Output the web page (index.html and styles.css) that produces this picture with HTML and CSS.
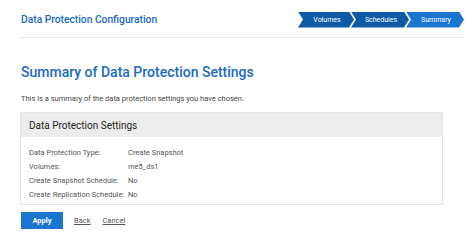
FILE: index.html
```html
<!DOCTYPE html>
<html>
<head>
<meta charset="utf-8">
<link rel="stylesheet" href="styles.css">
</head>
<body>
<div class="page">
  <header class="topbar">
    <div class="app-title">Data Protection Configuration</div>
    <nav class="steps">
      <span class="step">Volumes</span>
      <span class="step">Schedules</span>
      <span class="step current">Summary</span>
    </nav>
  </header>
  <h1 class="heading">Summary of Data Protection Settings</h1>
  <p class="intro">This is a summary of the data protection settings you have chosen.</p>
  <section class="panel">
    <div class="panel-head">Data Protection Settings</div>
    <div class="panel-body">
      <div class="row"><span class="label">Data Protection Type:</span><span class="value">Create Snapshot</span></div>
      <div class="row"><span class="label">Volumes:</span><span class="value">me5_ds1</span></div>
      <div class="row"><span class="label">Create Snapshot Schedule:</span><span class="value">No</span></div>
      <div class="row"><span class="label">Create Replication Schedule:</span><span class="value">No</span></div>
    </div>
  </section>
  <div class="actions">
    <button class="btn-primary">Apply</button>
    <a class="link" href="#">Back</a>
    <a class="link" href="#">Cancel</a>
  </div>
</div>
</body>
</html>
```
FILE: styles.css
```css
* { box-sizing: border-box; }
html, body { margin: 0; padding: 0; background: #fff; }
body { font-family: Roboto, "Liberation Sans", sans-serif; color: #333; }
.page { padding: 0 10px 0 20px; width: 474px; }
.topbar {
  height: 38px;
  display: flex;
  align-items: center;
  justify-content: space-between;
  border-bottom: 1px solid #ececec;
  padding-left: 1px;
}
.app-title { font-size: 10.25px; font-weight: 500; color: #1a6bbf; margin-top: 1px; }
.steps { display: flex; align-items: center; margin-top: 2px; }
.step {
  display: flex; align-items: center; justify-content: center;
  width: 58px; height: 16px;
  background: #0d5aa7; color: #fff;
  font-size: 7px;
  clip-path: polygon(0 0, calc(100% - 5px) 0, 100% 50%, calc(100% - 5px) 100%, 0 100%, 5px 50%);
  margin-left: -3px;
  padding-left: 2px;
}
.step:first-child { margin-left: 0; width: 56px; }
.step.current { background: #1a75d0; }
.heading { margin: 24px 0 0 1px; font-size: 14px; line-height: 20px; font-weight: 500; color: #1a6bbf; }
.intro { margin: 12px 0 0 1px; font-size: 7.5px; line-height: 10px; color: #444; }
.panel { margin-top: 8px; width: 423px; border: 1px solid #e6e6e6; }
.panel-head { height: 24px; background: #ececec; display: flex; align-items: center; padding-left: 8px; font-size: 10px; color: #222; }
.panel-body { padding: 9px 8px 2px; }
.row { display: flex; font-size: 7.5px; line-height: 14px; color: #555; }
.label { width: 99px; }
.actions { margin-top: 7px; display: flex; align-items: center; }
.btn-primary {
  width: 42px; height: 17px; border: 0; background: #1a75d0; color: #fff;
  font-family: inherit; font-size: 7.5px; font-weight: 700; padding: 0; margin-left: 1px;
}
.link { color: #555; font-size: 7.5px; text-decoration: underline; margin-left: 11px; }
.link + .link { margin-left: 12px; }
```
